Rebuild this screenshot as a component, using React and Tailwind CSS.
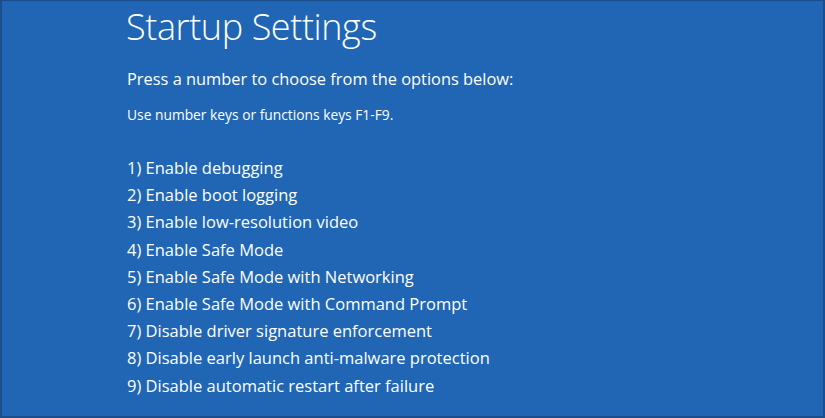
const options = [
  "1) Enable debugging",
  "2) Enable boot logging",
  "3) Enable low-resolution video",
  "4) Enable Safe Mode",
  "5) Enable Safe Mode with Networking",
  "6) Enable Safe Mode with Command Prompt",
  "7) Disable driver signature enforcement",
  "8) Disable early launch anti-malware protection",
  "9) Disable automatic restart after failure",
];

export default function App() {
  return (
    <div
      className="h-[418px] w-[825px] overflow-hidden border-x-2 border-t border-b-2 border-[#1a4f8c] bg-[#2066b4] text-white"
      style={{ fontFamily: '"Open Sans", "Noto Sans", sans-serif' }}
    >
      <div className="pl-[125px] pt-[3px]">
        <h1 className="-ml-[1px] text-[36px] font-light leading-[46px] tracking-[-0.4px]">
          Startup Settings
        </h1>
        <p className="mt-[17px] text-[16.4px] leading-[24px]">
          Press a number to choose from the options below:
        </p>
        <p className="mt-[15px] text-[13.8px] leading-[18px]">
          Use number keys or functions keys F1-F9.
        </p>
        <ul className="mt-[30px]">
          {options.map((o) => (
            <li key={o} className="text-[16.5px] leading-[27.2px]">
              {o}
            </li>
          ))}
        </ul>
      </div>
    </div>
  );
}
